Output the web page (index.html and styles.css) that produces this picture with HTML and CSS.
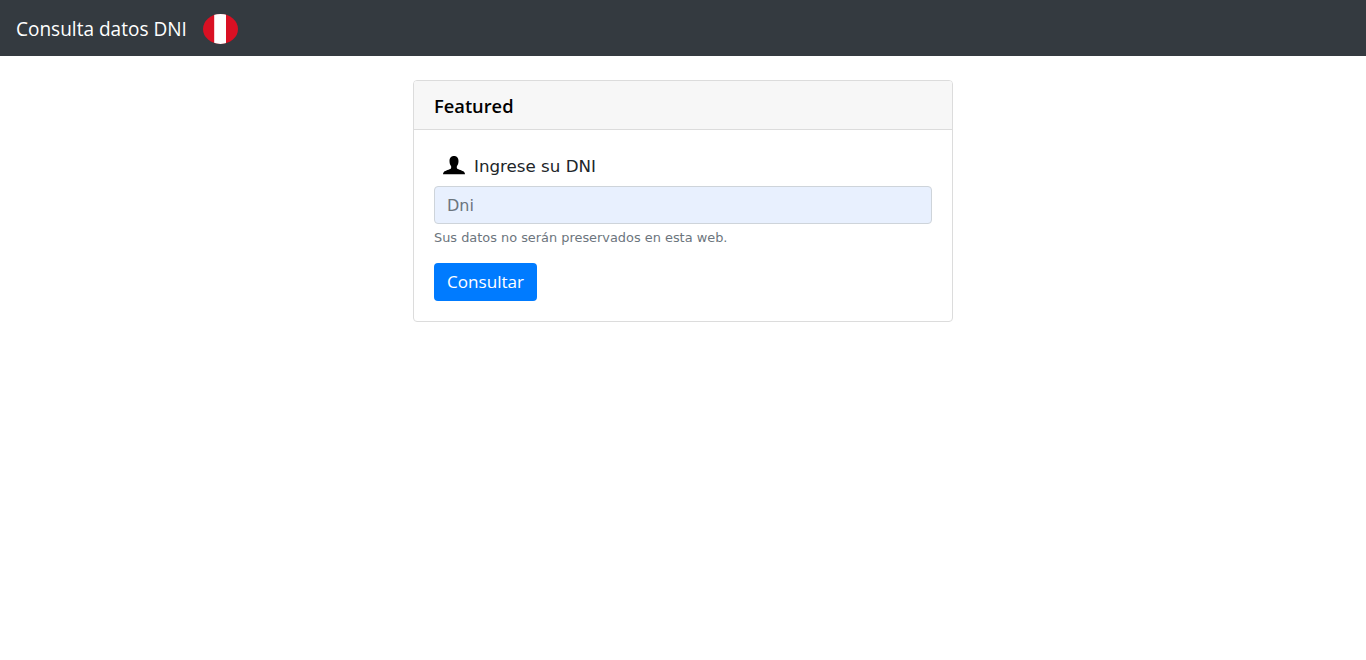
FILE: index.html
```html
<!DOCTYPE html>
<html lang="es">
<head>
<meta charset="utf-8">
<title>Consulta datos DNI</title>
<link rel="stylesheet" href="styles.css">
</head>
<body>
<nav class="navbar">
  <span class="brand">Consulta datos DNI</span>
  <svg class="flag" width="35" height="30" viewBox="0 0 35 30" aria-hidden="true">
    <defs><clipPath id="oval"><ellipse cx="17.5" cy="15" rx="17.500" ry="15"/></clipPath></defs>
    <g clip-path="url(#oval)">
      <rect width="35" height="30" fill="#d91023"/>
      <rect x="11.200" width="11.800" height="30" fill="#fff"/>
    </g>
  </svg>
</nav>
<main class="page">
  <section class="card">
    <header class="card-header">Featured</header>
    <form class="card-body">
      <div class="field">
        <label class="label" for="dni">
          <svg class="user" width="22" height="20" viewBox="0 0 22 20" aria-hidden="true">
            <path d="M11 0C7.900 0 6.500 2.200 6.500 5c0 2.200.6 3.900 1.500 5.100.3.500.3 1.900-.1 2.500C6.700 13.900 2.400 14.400.9 16 .3 16.600 0 17.400 0 18.200h22c0-.8-.3-1.600-.9-2.200-1.500-1.600-5.800-2.100-7-3.400-.4-.6-.4-2-.1-2.500.9-1.200 1.500-2.900 1.500-5.100C15.500 2.200 14.100 0 11 0z" fill="#000"/>
          </svg>
          <span>Ingrese su DNI</span>
        </label>
        <input class="input" id="dni" type="text" placeholder="Dni">
        <small class="help">Sus datos no serán preservados en esta web.</small>
      </div>
      <button class="button" type="button">Consultar</button>
    </form>
  </section>
</main>
</body>
</html>
```
FILE: styles.css
```css
* { box-sizing: border-box; }
body {
  margin: 0;
  background: #fff;
  color: #212529;
  font-family: "DejaVu Sans", sans-serif;
  font-size: 16px;
}
.navbar {
  height: 56px;
  background: #343a40;
  display: flex;
  align-items: center;
  padding: 0 16px;
}
.brand {
  font-family: "Open Sans", sans-serif;
  font-size: 19.05px;
  color: #fff;
  margin-right: 16px;
  padding-top: 2px;
}
.flag { display: block; margin-top: 2px; }
.page {
  display: flex;
  justify-content: center;
  padding-top: 24px;
}
.card {
  width: 540px;
  border: 1px solid #dcdcdc;
  border-radius: 4px;
  background: #fff;
}
.card-header {
  height: 49px;
  padding: 0 20px;
  display: flex;
  align-items: center;
  background: #f7f7f7;
  border-bottom: 1px solid #dcdcdc;
  border-radius: 3px 3px 0 0;
  font-family: "Open Sans", sans-serif;
  font-size: 18.3px;
  font-weight: 600;
  color: #000;
}
.card-body { padding: 20px; }
.field { margin-bottom: 16px; }
.label {
  display: flex;
  align-items: center;
  height: 24px;
  margin: 4px 0 8px;
  padding-left: 9px;
  gap: 9px;
  font-size: 16.7px;
}
.input {
  display: block;
  width: 100%;
  height: 38px;
  padding: 6px 12px;
  border: 1px solid #ced4da;
  border-radius: 4px;
  background: #e8f0fe;
  font-family: "DejaVu Sans", sans-serif;
  font-size: 16px;
  color: #495057;
}
.input::placeholder { color: #6c757d; opacity: 1; }
.help {
  display: block;
  margin-top: 4px;
  font-size: 12.9px;
  line-height: 19px;
  color: #6c757d;
}
.button {
  display: block;
  height: 38px;
  width: 103px;
  padding: 0 0 2px;
  border: 0;
  border-radius: 4px;
  background: #007bff;
  color: #fff;
  font-family: "Open Sans", sans-serif;
  font-size: 17.1px;
}
```
